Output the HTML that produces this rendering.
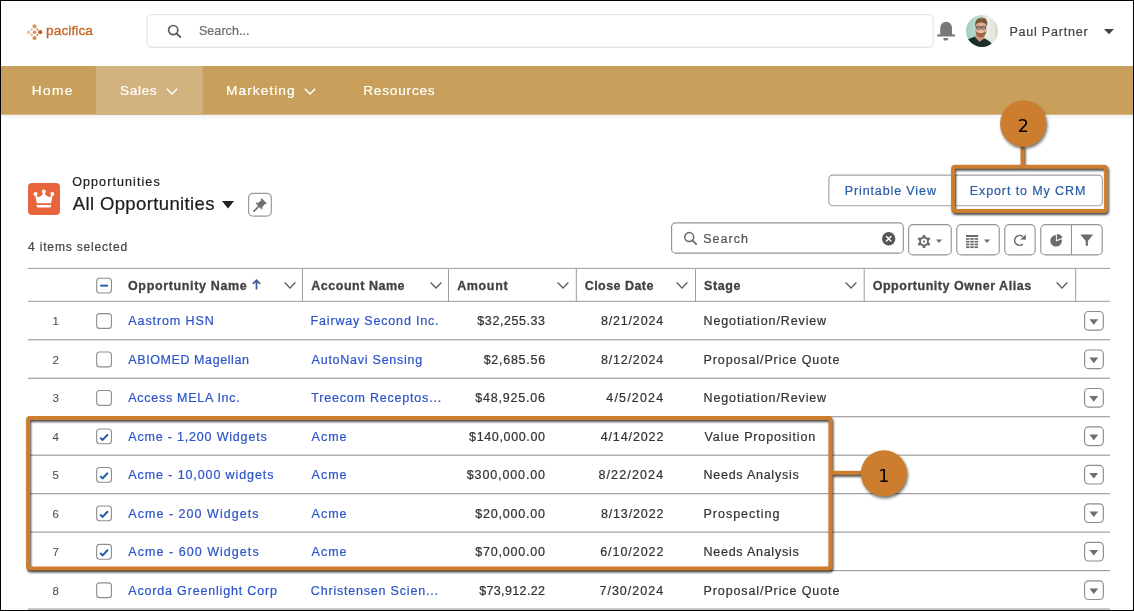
<!DOCTYPE html>
<html lang="en"><head><meta charset="utf-8"><title>Opportunities | Pacifica</title>
<style>
*{box-sizing:border-box;margin:0;padding:0}
html,body{width:1134px;height:611px;overflow:hidden;background:#fff}
body{position:relative;font-family:"Liberation Sans",sans-serif;font-size:13px;color:#333;-webkit-text-stroke:.22px}
.a{position:absolute;white-space:nowrap}
.frame{position:absolute;left:0;top:0;width:1134px;height:611px;border:1px solid #000;z-index:50;pointer-events:none}
.navt{color:#fff;-webkit-text-stroke:.2px #fff}
.blue{color:#2a5caa}
.link{color:#2d55c9}
.hd{color:#424242;-webkit-text-stroke:.3px}
svg{position:absolute;overflow:visible}
#app{position:absolute;left:0;top:0;width:1134px;height:611px;will-change:transform;background:transparent}
</style></head>
<body><div id="app">
<svg class="a" style="left:26px;top:23px" width="18" height="18" viewBox="26 23 18 18">
<circle cx="34.5" cy="26.4" r="2.1" fill="#d99a66"/><circle cx="28.8" cy="32.2" r="2" fill="#f0cdb0"/>
<circle cx="34.5" cy="32.2" r="1.8" fill="#dc9562"/><circle cx="40.2" cy="32.2" r="2.1" fill="#c45f21"/>
<circle cx="34.5" cy="38" r="2.1" fill="#d98d55"/>
<circle cx="31.7" cy="29.5" r="1" fill="#e2a77b"/><circle cx="37.3" cy="29.5" r="1" fill="#cf7a3f"/>
<circle cx="31.7" cy="35" r="1" fill="#e2a77b"/><circle cx="37.3" cy="35" r="1" fill="#cf7a3f"/>
</svg>
<div class="a " style="left:46.10px;top:22.75px;font-size:13.7px;line-height:16px;font-weight:400;letter-spacing:0.057px;color:#c4662b;-webkit-text-stroke:.35px #c4662b">pacifica</div>
<svg style="left:0;top:0" width="1134" height="611" viewBox="0 0 1134 611"><rect x="147.15" y="14.55" width="786.10" height="32.70" rx="4.5" fill="#fff" stroke="#e6e6e6" stroke-width="1.3"/></svg>
<svg style="left:168px;top:25px" width="13" height="13" viewBox="0 0 13 13"><circle cx="5.2" cy="5.1" r="4.6" fill="none" stroke="#5e5e5e" stroke-width="1.7"/><path d="M8.6 8.5L12.2 12" stroke="#5e5e5e" stroke-width="1.8" stroke-linecap="round"/></svg>
<div class="a " style="left:198.95px;top:23.25px;font-size:12.5px;line-height:16px;font-weight:400;letter-spacing:0.069px;color:#6e6e6e">Search...</div>
<svg style="left:936px;top:21px" width="20" height="20" viewBox="936 21 20 20"><path fill="#787878" d="M940.2 34.3V27.9a5.9 6.1 0 0 1 11.8 0V34.3l2.6 0.3q.4 .1 .4 .5v.9q0 .5-.5 .5h-16.8q-.5 0-.5-.5v-.9q0-.4 .4-.5z"/><path fill="#787878" d="M943.3 38h4.8a2.4 2.6 0 0 1-4.8 0z"/></svg>
<svg style="left:965.8px;top:15.1px" width="32" height="32" viewBox="0 0 32 32">
<defs><clipPath id="av"><circle cx="16" cy="16" r="16"/></clipPath><filter id="avb" x="-10%" y="-10%" width="120%" height="120%"><feGaussianBlur stdDeviation=".45"/></filter>
<linearGradient id="avbg" x1="0" x2="1" y1="0" y2="0"><stop offset="0" stop-color="#a3cebd"/><stop offset=".45" stop-color="#c2dfd3"/><stop offset=".64" stop-color="#dfeae3"/><stop offset=".86" stop-color="#e7e7e0"/><stop offset="1" stop-color="#dccdc2"/></linearGradient></defs>
<g clip-path="url(#av)"><rect width="32" height="32" fill="url(#avbg)"/><g filter="url(#avb)">
<rect x="21.6" y="0" width="1.6" height="24" fill="#f1f4f0" opacity=".8"/>
<path d="M1 24.6C4 23.4 6.6 22.7 8.8 21.6L13.6 26.6L17.9 23.2C21 24.3 23.6 26 25.6 28.6L24 33H0z" fill="#1b2d29"/>
<path d="M10.2 16.5L9.3 21.9L13.6 26.9L18.2 23.3L18.9 16.5z" fill="#cc9272"/>
<ellipse cx="14.9" cy="13.3" rx="5.5" ry="7.5" fill="#e2ad90"/>
<path d="M9.5 15.3C9.8 20.4 12 22.3 14.8 22.3C17.8 22.3 20 20.2 20.4 15.3C19.3 17.7 17.6 18 15 18C12.2 18 10.7 17.7 9.5 15.3z" fill="#98684c"/>
<path d="M9.3 11.8C8.4 6 11.2 2.4 15.6 2.4C20.2 2.4 22.4 5.8 20.9 11.6C20 8.6 18.6 7.5 15.2 7.5C11.7 7.5 10.3 8.8 9.3 11.8z" fill="#7a563b"/>
<path d="M11.5 4.2C13.5 2.6 17.5 2.6 19.6 4.6C17.6 3.9 14 3.8 11.5 4.2z" fill="#a67c55"/>
<path d="M9.6 12.2h10.6" stroke="#4d4845" stroke-width=".8"/><rect x="10.4" y="11.3" width="3.9" height="2.7" rx=".8" fill="#c9a48e" fill-opacity=".5" stroke="#4d4845" stroke-width=".75"/><rect x="15.6" y="11.3" width="3.9" height="2.7" rx=".8" fill="#c9a48e" fill-opacity=".5" stroke="#4d4845" stroke-width=".75"/>
<path d="M12.7 16.6q2.2 1.5 4.5 0" stroke="#f4e9e0" stroke-width="1" fill="none"/>
</g></g></svg>
<div class="a " style="left:1009.40px;top:24.25px;font-size:12.5px;line-height:16px;font-weight:400;letter-spacing:0.795px;color:#444">Paul Partner</div>
<svg style="left:1104px;top:28.6px" width="10" height="6" viewBox="0 0 10 6"><path d="M0 .1h10L5 5.3z" fill="#444"/></svg>
<svg style="left:0;top:0" width="1134" height="611" viewBox="0 0 1134 611"><defs><linearGradient id="nsh" x1="0" x2="0" y1="0" y2="1"><stop offset="0" stop-color="#eeeff1"/><stop offset="1" stop-color="#fff"/></linearGradient></defs><rect x="1" y="114" width="1132" height="6" fill="url(#nsh)"/><rect x="1" y="66" width="1132" height="48.7" fill="#c8a05c"/><rect x="95.9" y="66" width="106.8" height="48.7" fill="#d2b27f"/></svg>
<div class="a navt" style="left:31.75px;top:80.75px;font-size:13.7px;line-height:20px;font-weight:400;letter-spacing:1.383px;">Home</div>
<div class="a navt" style="left:120.05px;top:80.75px;font-size:13.7px;line-height:20px;font-weight:400;letter-spacing:0.600px;">Sales</div>
<svg style="left:165.5px;top:88px" width="12" height="7" viewBox="0 0 12 7"><path d="M.8 .8L6 6L11.2 .8" fill="none" stroke="#fff" stroke-width="1.5"/></svg>
<div class="a navt" style="left:226.05px;top:80.75px;font-size:13.7px;line-height:20px;font-weight:400;letter-spacing:1.062px;">Marketing</div>
<svg style="left:303.5px;top:88px" width="12" height="7" viewBox="0 0 12 7"><path d="M.8 .8L6 6L11.2 .8" fill="none" stroke="#fff" stroke-width="1.5"/></svg>
<div class="a navt" style="left:363.15px;top:80.75px;font-size:13.7px;line-height:20px;font-weight:400;letter-spacing:0.769px;">Resources</div>
<svg style="left:28.3px;top:182.5px" width="32" height="32" viewBox="0 0 32 32"><rect width="32" height="32" rx="4" fill="#e8643c"/>
<g fill="#fff"><circle cx="7.5" cy="11" r="2"/><circle cx="15.9" cy="8.6" r="2"/><circle cx="24.3" cy="11" r="2"/>
<path d="M6.9 11.6Q9.6 14.9 12.1 13.6Q14.6 12 15.9 8.8Q17.2 12 19.7 13.6Q22.2 14.9 24.9 11.6L23 20.3H8.8z"/>
<path d="M8.5 22h14.8v.4q0 2.2-2.2 2.2h-10.4q-2.2 0-2.2-2.2z"/></g></svg>
<div class="a " style="left:72.20px;top:174.25px;font-size:12.5px;line-height:16px;font-weight:400;letter-spacing:1.092px;color:#222">Opportunities</div>
<div class="a " style="left:72.70px;top:191.75px;font-size:18.5px;line-height:24px;font-weight:400;letter-spacing:0.381px;color:#1c1c1c">All Opportunities</div>
<svg style="left:222.2px;top:200.6px" width="12" height="8" viewBox="0 0 12 8"><path d="M0 .1h12L6 7.4z" fill="#222"/></svg>
<svg style="left:0;top:0" width="1134" height="611" viewBox="0 0 1134 611"><rect x="248.60" y="193.30" width="22.70" height="22.80" rx="4.3" fill="#fff" stroke="#9a9a9a" stroke-width="1.2"/><g transform="translate(259 206.1) rotate(45)" fill="#6e6e6e">
<rect x="-3.7" y="-7.5" width="7.4" height="1.5" rx=".4"/><path d="M-2.6 -6.2h5.2l.5 5.1h-6.2z"/><path d="M-4.4 .4q0-1.7 1.4-1.7h6q1.4 0 1.4 1.7z"/><rect x="-.8" y="0" width="1.6" height="7.8"/></g></svg>
<div class="a " style="left:28.05px;top:239.25px;font-size:12px;line-height:16px;font-weight:400;letter-spacing:0.830px;color:#444">4 items selected</div>
<svg style="left:0;top:0" width="1134" height="611" viewBox="0 0 1134 611"><rect x="828.88" y="175.07" width="273.45" height="30.65" rx="4" fill="#fff" stroke="#a3a3a3" stroke-width="1.15"/><rect x="954.5" y="175" width="1.1" height="31" fill="#a3a3a3"/></svg>
<div class="a blue" style="left:844.70px;top:183.25px;font-size:12.5px;line-height:16px;font-weight:400;letter-spacing:0.888px;">Printable View</div>
<div class="a blue" style="left:969.80px;top:183.25px;font-size:12.5px;line-height:16px;font-weight:400;letter-spacing:0.893px;">Export to My CRM</div>
<svg style="left:0;top:0" width="1134" height="611" viewBox="0 0 1134 611"><rect x="671.58" y="222.88" width="231.75" height="30.25" rx="4" fill="#fff" stroke="#949494" stroke-width="1.15"/></svg>
<svg style="left:683.5px;top:231.6px" width="13" height="13" viewBox="0 0 13 13"><circle cx="5.2" cy="5.1" r="4.5" fill="none" stroke="#666" stroke-width="1.5"/><path d="M8.5 8.4L12.2 12.1" stroke="#666" stroke-width="1.6" stroke-linecap="round"/></svg>
<div class="a " style="left:703.25px;top:231.25px;font-size:12.5px;line-height:16px;font-weight:400;letter-spacing:1.000px;color:#555">Search</div>
<svg style="left:882.3px;top:232px" width="13.4" height="13.4" viewBox="0 0 14 14"><circle cx="7" cy="7" r="7" fill="#555"/><path d="M4.7 4.7L9.3 9.3M9.3 4.7L4.7 9.3" stroke="#fff" stroke-width="1.5" stroke-linecap="round"/></svg>
<svg style="left:0;top:0" width="1134" height="611" viewBox="0 0 1134 611"><rect x="908.68" y="224.67" width="42.55" height="30.25" rx="4.5" fill="#fff" stroke="#949494" stroke-width="1.15"/><rect x="956.78" y="224.67" width="42.45" height="30.25" rx="4.5" fill="#fff" stroke="#949494" stroke-width="1.15"/><rect x="1004.78" y="224.67" width="30.35" height="30.25" rx="4.5" fill="#fff" stroke="#949494" stroke-width="1.15"/><rect x="1040.78" y="224.67" width="61.45" height="30.25" rx="4.5" fill="#fff" stroke="#949494" stroke-width="1.15"/><rect x="1070.9" y="224.6" width="1.1" height="30.4" fill="#949494"/></svg>
<svg style="left:0;top:0" width="1134" height="611" viewBox="0 0 1134 611"><g fill="#6b6b6b">
<path fill-rule="evenodd" d="M922.49 236.84L922.81 234.91L925.19 234.91L925.51 236.84L927.28 237.86L929.12 237.18L930.30 239.23L928.79 240.48L928.79 242.52L930.30 243.77L929.12 245.82L927.28 245.14L925.51 246.16L925.19 248.09L922.81 248.09L922.49 246.16L920.72 245.14L918.88 245.82L917.70 243.77L919.21 242.52L919.21 240.48L917.70 239.23L918.88 237.18L920.72 237.86z M927 241.5a3 3 0 1 0 -6 0a3 3 0 1 0 6 0z"/><circle cx="924" cy="241.5" r="1.1"/>
<path d="M936 239.5h6l-3 3.6z"/><path d="M984 239.5h6l-3 3.6z"/>
<rect x="966" y="235" width="12.2" height="2"/>
<rect x="966.0" y="238.10" width="3.5" height="1.7"/>
<rect x="970.3" y="238.10" width="3.5" height="1.7"/>
<rect x="974.6" y="238.10" width="3.5" height="1.7"/>
<rect x="966.0" y="240.85" width="3.5" height="1.7"/>
<rect x="970.3" y="240.85" width="3.5" height="1.7"/>
<rect x="974.6" y="240.85" width="3.5" height="1.7"/>
<rect x="966.0" y="243.60" width="3.5" height="1.7"/>
<rect x="970.3" y="243.60" width="3.5" height="1.7"/>
<rect x="974.6" y="243.60" width="3.5" height="1.7"/>
<rect x="966.0" y="246.35" width="3.5" height="1.7"/>
<rect x="970.3" y="246.35" width="3.5" height="1.7"/>
<rect x="974.6" y="246.35" width="3.5" height="1.7"/>
</g>
<path d="M1022.7 236.6A4.9 4.9 0 1 0 1022.8 244.1" fill="none" stroke="#6b6b6b" stroke-width="1.6"/><path d="M1025.9 234.4V239.8L1020.2 239.5z" fill="#6b6b6b"/>
<g fill="#6b6b6b"><circle cx="1056.1" cy="240.8" r="5.8"/><path d="M1056.9 240V233.9A5.9 5.9 0 0 1 1062.5 237.8z" stroke="#fff" stroke-width="2" paint-order="stroke"/>
<path d="M1080.4 234.4h12.8l-5.3 6.6v4.8h-2.2v-4.8z"/></g>
<rect x="28" y="267.9" width="1082" height="1" fill="#9c9c9c"/><rect x="28" y="300.80" width="1082" height="1" fill="#9c9c9c"/>
<rect x="28" y="339.20" width="1082" height="1.15" fill="#9b9b9b"/>
<rect x="28" y="377.67" width="1082" height="1.15" fill="#9b9b9b"/>
<rect x="28" y="416.14" width="1082" height="1.15" fill="#9b9b9b"/>
<rect x="28" y="454.61" width="1082" height="1.15" fill="#9b9b9b"/>
<rect x="28" y="493.08" width="1082" height="1.15" fill="#9b9b9b"/>
<rect x="28" y="531.55" width="1082" height="1.15" fill="#9b9b9b"/>
<rect x="28" y="570.02" width="1082" height="1.15" fill="#9b9b9b"/>
<rect x="28" y="608.49" width="1082" height="1.15" fill="#9b9b9b"/>
<rect x="301.9" y="268.4" width="1" height="33" fill="#9c9c9c"/>
<rect x="448.0" y="268.4" width="1" height="33" fill="#9c9c9c"/>
<rect x="575.8" y="268.4" width="1" height="33" fill="#9c9c9c"/>
<rect x="695.0" y="268.4" width="1" height="33" fill="#9c9c9c"/>
<rect x="863.7" y="268.4" width="1" height="33" fill="#9c9c9c"/>
<rect x="1075.2" y="268.4" width="1" height="33" fill="#9c9c9c"/>
</svg>
<svg style="left:0;top:0" width="1134" height="611" viewBox="0 0 1134 611"><rect x="96.65" y="278.25" width="14.80" height="14.70" rx="3" fill="#fff" stroke="#8e8e8e" stroke-width="1.1"/><rect x="100.2" y="284.7" width="7.8" height="1.9" fill="#1f5ba8"/></svg>
<div class="a hd" style="left:128.00px;top:278.25px;font-size:12.5px;line-height:16px;font-weight:700;letter-spacing:0.647px;">Opportunity Name</div>
<svg style="left:283.8px;top:282.3px" width="12" height="7" viewBox="0 0 12 7"><path d="M.6 .6L6 6L11.4 .6" fill="none" stroke="#606060" stroke-width="1.35"/></svg>
<div class="a hd" style="left:311.25px;top:278.25px;font-size:12.5px;line-height:16px;font-weight:700;letter-spacing:0.523px;">Account Name</div>
<svg style="left:429.5px;top:282.3px" width="12" height="7" viewBox="0 0 12 7"><path d="M.6 .6L6 6L11.4 .6" fill="none" stroke="#606060" stroke-width="1.35"/></svg>
<div class="a hd" style="left:457.15px;top:278.25px;font-size:12.5px;line-height:16px;font-weight:700;letter-spacing:0.650px;">Amount</div>
<svg style="left:557px;top:282.3px" width="12" height="7" viewBox="0 0 12 7"><path d="M.6 .6L6 6L11.4 .6" fill="none" stroke="#606060" stroke-width="1.35"/></svg>
<div class="a hd" style="left:584.70px;top:278.25px;font-size:12.5px;line-height:16px;font-weight:700;letter-spacing:0.450px;">Close Date</div>
<svg style="left:676px;top:282.3px" width="12" height="7" viewBox="0 0 12 7"><path d="M.6 .6L6 6L11.4 .6" fill="none" stroke="#606060" stroke-width="1.35"/></svg>
<div class="a hd" style="left:704.00px;top:278.25px;font-size:12.5px;line-height:16px;font-weight:700;letter-spacing:0.625px;">Stage</div>
<svg style="left:845px;top:282.3px" width="12" height="7" viewBox="0 0 12 7"><path d="M.6 .6L6 6L11.4 .6" fill="none" stroke="#606060" stroke-width="1.35"/></svg>
<div class="a hd" style="left:872.70px;top:278.25px;font-size:12.5px;line-height:16px;font-weight:700;letter-spacing:0.530px;">Opportunity Owner Alias</div>
<svg style="left:1056px;top:282.3px" width="12" height="7" viewBox="0 0 12 7"><path d="M.6 .6L6 6L11.4 .6" fill="none" stroke="#606060" stroke-width="1.35"/></svg>
<svg style="left:251.5px;top:279.3px" width="9" height="12" viewBox="0 0 9 12"><path d="M4.5 10.5V1.2M.9 4.9L4.5 1.2L8.1 4.9" fill="none" stroke="#3f5d97" stroke-width="1.8"/></svg>
<div class="a" style="left:52.4px;top:313.25px;font-size:11.5px;line-height:16px;color:#444;-webkit-text-stroke:0">1</div>
<svg style="left:0;top:0" width="1134" height="611" viewBox="0 0 1134 611"><rect x="96.65" y="313.58" width="14.80" height="14.80" rx="3" fill="#fff" stroke="#8e8e8e" stroke-width="1.1"/><rect x="1084.58" y="311.51" width="18.75" height="18.65" rx="4" fill="#fff" stroke="#8c8c8c" stroke-width="1.15"/><path d="M1089.4 319.13h8.8l-4.4 5.6z" fill="#6e6e6e"/></svg>
<div class="a link" style="left:128.30px;top:313.25px;font-size:12.5px;line-height:16px;font-weight:400;letter-spacing:0.900px;">Aastrom HSN</div>
<div class="a link" style="left:310.60px;top:313.25px;font-size:12.5px;line-height:16px;font-weight:400;letter-spacing:0.817px;">Fairway Second Inc.</div>
<div class="a " style="left:477.35px;top:313.25px;font-size:12.5px;line-height:16px;font-weight:400;letter-spacing:0.572px;">$32,255.33</div>
<div class="a " style="left:600.90px;top:313.25px;font-size:12.5px;line-height:16px;font-weight:400;letter-spacing:0.831px;">8/21/2024</div>
<div class="a " style="left:703.50px;top:313.25px;font-size:12.5px;line-height:16px;font-weight:400;letter-spacing:0.879px;">Negotiation/Review</div>
<div class="a" style="left:52.4px;top:352.25px;font-size:11.5px;line-height:16px;color:#444;-webkit-text-stroke:0">2</div>
<svg style="left:0;top:0" width="1134" height="611" viewBox="0 0 1134 611"><rect x="96.65" y="352.06" width="14.80" height="14.80" rx="3" fill="#fff" stroke="#8e8e8e" stroke-width="1.1"/><rect x="1084.58" y="349.98" width="18.75" height="18.65" rx="4" fill="#fff" stroke="#8c8c8c" stroke-width="1.15"/><path d="M1089.4 357.61h8.8l-4.4 5.6z" fill="#6e6e6e"/></svg>
<div class="a link" style="left:128.30px;top:352.25px;font-size:12.5px;line-height:16px;font-weight:400;letter-spacing:0.587px;">ABIOMED Magellan</div>
<div class="a link" style="left:311.60px;top:352.25px;font-size:12.5px;line-height:16px;font-weight:400;letter-spacing:0.753px;">AutoNavi Sensing</div>
<div class="a " style="left:483.65px;top:352.25px;font-size:12.5px;line-height:16px;font-weight:400;letter-spacing:0.731px;">$2,685.56</div>
<div class="a " style="left:600.90px;top:352.25px;font-size:12.5px;line-height:16px;font-weight:400;letter-spacing:0.831px;">8/12/2024</div>
<div class="a " style="left:703.50px;top:352.25px;font-size:12.5px;line-height:16px;font-weight:400;letter-spacing:0.897px;">Proposal/Price Quote</div>
<div class="a" style="left:52.4px;top:390.25px;font-size:11.5px;line-height:16px;color:#444;-webkit-text-stroke:0">3</div>
<svg style="left:0;top:0" width="1134" height="611" viewBox="0 0 1134 611"><rect x="96.65" y="390.53" width="14.80" height="14.80" rx="3" fill="#fff" stroke="#8e8e8e" stroke-width="1.1"/><rect x="1084.58" y="388.45" width="18.75" height="18.65" rx="4" fill="#fff" stroke="#8c8c8c" stroke-width="1.15"/><path d="M1089.4 396.08h8.8l-4.4 5.6z" fill="#6e6e6e"/></svg>
<div class="a link" style="left:128.30px;top:390.25px;font-size:12.5px;line-height:16px;font-weight:400;letter-spacing:0.713px;">Access MELA Inc.</div>
<div class="a link" style="left:311.35px;top:390.25px;font-size:12.5px;line-height:16px;font-weight:400;letter-spacing:0.792px;">Treecom Receptos...</div>
<div class="a " style="left:475.35px;top:390.25px;font-size:12.5px;line-height:16px;font-weight:400;letter-spacing:0.794px;">$48,925.06</div>
<div class="a " style="left:606.25px;top:390.25px;font-size:12.5px;line-height:16px;font-weight:400;letter-spacing:1.186px;">4/5/2024</div>
<div class="a " style="left:703.50px;top:390.25px;font-size:12.5px;line-height:16px;font-weight:400;letter-spacing:0.879px;">Negotiation/Review</div>
<div class="a" style="left:52.4px;top:429.25px;font-size:11.5px;line-height:16px;color:#444;-webkit-text-stroke:0">4</div>
<svg style="left:0;top:0" width="1134" height="611" viewBox="0 0 1134 611"><rect x="96.65" y="429.00" width="14.80" height="14.80" rx="3" fill="#fff" stroke="#8e8e8e" stroke-width="1.1"/><rect x="1084.58" y="426.92" width="18.75" height="18.65" rx="4" fill="#fff" stroke="#8c8c8c" stroke-width="1.15"/><path d="M100.2 437.65l2.4 2.3l5.3 -5.6" fill="none" stroke="#1f5ba8" stroke-width="2"/><path d="M1089.4 434.55h8.8l-4.4 5.6z" fill="#6e6e6e"/></svg>
<div class="a link" style="left:128.30px;top:429.25px;font-size:12.5px;line-height:16px;font-weight:400;letter-spacing:0.811px;">Acme - 1,200 Widgets</div>
<div class="a link" style="left:311.60px;top:429.25px;font-size:12.5px;line-height:16px;font-weight:400;letter-spacing:1.000px;">Acme</div>
<div class="a " style="left:469.05px;top:429.25px;font-size:12.5px;line-height:16px;font-weight:400;letter-spacing:0.645px;">$140,000.00</div>
<div class="a " style="left:600.65px;top:429.25px;font-size:12.5px;line-height:16px;font-weight:400;letter-spacing:0.894px;">4/14/2022</div>
<div class="a " style="left:704.50px;top:429.25px;font-size:12.5px;line-height:16px;font-weight:400;letter-spacing:0.853px;">Value Proposition</div>
<div class="a" style="left:52.4px;top:467.25px;font-size:11.5px;line-height:16px;color:#444;-webkit-text-stroke:0">5</div>
<svg style="left:0;top:0" width="1134" height="611" viewBox="0 0 1134 611"><rect x="96.65" y="467.46" width="14.80" height="14.80" rx="3" fill="#fff" stroke="#8e8e8e" stroke-width="1.1"/><rect x="1084.58" y="465.39" width="18.75" height="18.65" rx="4" fill="#fff" stroke="#8c8c8c" stroke-width="1.15"/><path d="M100.2 476.11l2.4 2.3l5.3 -5.6" fill="none" stroke="#1f5ba8" stroke-width="2"/><path d="M1089.4 473.01h8.8l-4.4 5.6z" fill="#6e6e6e"/></svg>
<div class="a link" style="left:128.30px;top:467.25px;font-size:12.5px;line-height:16px;font-weight:400;letter-spacing:0.897px;">Acme - 10,000 widgets</div>
<div class="a link" style="left:311.60px;top:467.25px;font-size:12.5px;line-height:16px;font-weight:400;letter-spacing:1.000px;">Acme</div>
<div class="a " style="left:466.75px;top:467.25px;font-size:12.5px;line-height:16px;font-weight:400;letter-spacing:0.875px;">$300,000.00</div>
<div class="a " style="left:598.40px;top:467.25px;font-size:12.5px;line-height:16px;font-weight:400;letter-spacing:1.144px;">8/22/2024</div>
<div class="a " style="left:703.50px;top:467.25px;font-size:12.5px;line-height:16px;font-weight:400;letter-spacing:0.746px;">Needs Analysis</div>
<div class="a" style="left:52.4px;top:506.25px;font-size:11.5px;line-height:16px;color:#444;-webkit-text-stroke:0">6</div>
<svg style="left:0;top:0" width="1134" height="611" viewBox="0 0 1134 611"><rect x="96.65" y="505.94" width="14.80" height="14.80" rx="3" fill="#fff" stroke="#8e8e8e" stroke-width="1.1"/><rect x="1084.58" y="503.86" width="18.75" height="18.65" rx="4" fill="#fff" stroke="#8c8c8c" stroke-width="1.15"/><path d="M100.2 514.59l2.4 2.3l5.3 -5.6" fill="none" stroke="#1f5ba8" stroke-width="2"/><path d="M1089.4 511.49h8.8l-4.4 5.6z" fill="#6e6e6e"/></svg>
<div class="a link" style="left:128.30px;top:506.25px;font-size:12.5px;line-height:16px;font-weight:400;letter-spacing:1.035px;">Acme - 200 Widgets</div>
<div class="a link" style="left:311.60px;top:506.25px;font-size:12.5px;line-height:16px;font-weight:400;letter-spacing:1.000px;">Acme</div>
<div class="a " style="left:475.35px;top:506.25px;font-size:12.5px;line-height:16px;font-weight:400;letter-spacing:0.794px;">$20,000.00</div>
<div class="a " style="left:600.90px;top:506.25px;font-size:12.5px;line-height:16px;font-weight:400;letter-spacing:0.862px;">8/13/2022</div>
<div class="a " style="left:703.50px;top:506.25px;font-size:12.5px;line-height:16px;font-weight:400;letter-spacing:0.985px;">Prospecting</div>
<div class="a" style="left:52.4px;top:544.25px;font-size:11.5px;line-height:16px;color:#444;-webkit-text-stroke:0">7</div>
<svg style="left:0;top:0" width="1134" height="611" viewBox="0 0 1134 611"><rect x="96.65" y="544.40" width="14.80" height="14.80" rx="3" fill="#fff" stroke="#8e8e8e" stroke-width="1.1"/><rect x="1084.58" y="542.33" width="18.75" height="18.65" rx="4" fill="#fff" stroke="#8c8c8c" stroke-width="1.15"/><path d="M100.2 553.06l2.4 2.3l5.3 -5.6" fill="none" stroke="#1f5ba8" stroke-width="2"/><path d="M1089.4 549.96h8.8l-4.4 5.6z" fill="#6e6e6e"/></svg>
<div class="a link" style="left:128.30px;top:544.25px;font-size:12.5px;line-height:16px;font-weight:400;letter-spacing:1.047px;">Acme - 600 Widgets</div>
<div class="a link" style="left:311.60px;top:544.25px;font-size:12.5px;line-height:16px;font-weight:400;letter-spacing:1.000px;">Acme</div>
<div class="a " style="left:475.35px;top:544.25px;font-size:12.5px;line-height:16px;font-weight:400;letter-spacing:0.794px;">$70,000.00</div>
<div class="a " style="left:600.15px;top:544.25px;font-size:12.5px;line-height:16px;font-weight:400;letter-spacing:0.956px;">6/10/2022</div>
<div class="a " style="left:703.50px;top:544.25px;font-size:12.5px;line-height:16px;font-weight:400;letter-spacing:0.746px;">Needs Analysis</div>
<div class="a" style="left:52.4px;top:583.25px;font-size:11.5px;line-height:16px;color:#444;-webkit-text-stroke:0">8</div>
<svg style="left:0;top:0" width="1134" height="611" viewBox="0 0 1134 611"><rect x="96.65" y="582.87" width="14.80" height="14.80" rx="3" fill="#fff" stroke="#8e8e8e" stroke-width="1.1"/><rect x="1084.58" y="580.80" width="18.75" height="18.65" rx="4" fill="#fff" stroke="#8c8c8c" stroke-width="1.15"/><path d="M1089.4 588.42h8.8l-4.4 5.6z" fill="#6e6e6e"/></svg>
<div class="a link" style="left:128.30px;top:583.25px;font-size:12.5px;line-height:16px;font-weight:400;letter-spacing:0.821px;">Acorda Greenlight Corp</div>
<div class="a link" style="left:310.85px;top:583.25px;font-size:12.5px;line-height:16px;font-weight:400;letter-spacing:0.800px;">Christensen Scien...</div>
<div class="a " style="left:479.15px;top:583.25px;font-size:12.5px;line-height:16px;font-weight:400;letter-spacing:0.372px;">$73,912.22</div>
<div class="a " style="left:599.45px;top:583.25px;font-size:12.5px;line-height:16px;font-weight:400;letter-spacing:1.012px;">7/30/2024</div>
<div class="a " style="left:703.50px;top:583.25px;font-size:12.5px;line-height:16px;font-weight:400;letter-spacing:0.897px;">Proposal/Price Quote</div>
<svg class="ann" style="left:0;top:0;z-index:20" width="1134" height="611" viewBox="0 0 1134 611"><g style="filter:drop-shadow(1.1px 2.4px 1.1px rgba(0,0,0,.7))" fill="none" stroke="#cc7e2e" stroke-width="4"><rect x="28.1" y="418" width="802.4" height="150.4" rx="2"/><path d="M832 472.8H862"/><rect x="953.1" y="166.8" width="153" height="44.2" rx="2"/><path d="M1022.6 146V166"/></g><g style="filter:drop-shadow(1px 2.5px 1.6px rgba(0,0,0,.55))" fill="#cc7e2e"><circle cx="883.9" cy="473.3" r="23.1"/><circle cx="1023.3" cy="123.6" r="23.2"/></g><g font-family="DejaVu Sans, Liberation Sans, sans-serif" font-size="17.5" text-anchor="middle" fill="#000"><text x="883.9" y="481.7">1</text><text x="1023.4" y="132.1">2</text></g></svg>
<div class="frame"></div>
</div></body></html>
